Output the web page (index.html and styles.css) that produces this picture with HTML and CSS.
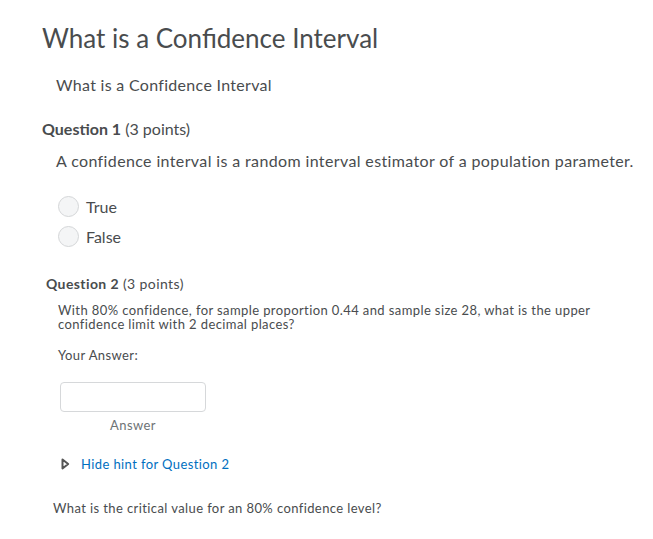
FILE: index.html
```html
<!DOCTYPE html>
<html lang="en">
<head>
    <meta charset="UTF-8">
    <title>What is a Confidence Interval</title>
    <link rel="stylesheet" href="styles.css">
</head>
<body>
    <div class="page">
        <h1 class="title">What is a Confidence Interval</h1>
        <p class="intro">What is a Confidence Interval</p>

        <!-- Question 1 -->
        <section class="question q1">
            <h2 class="q-head"><strong>Question 1</strong> (3 points)</h2>
            <p class="q-text">A confidence interval is a random interval estimator of a population parameter.</p>
            <label class="choice"><span class="radio"></span>True</label>
            <label class="choice"><span class="radio"></span>False</label>
        </section>

        <!-- Question 2 -->
        <section class="question q2">
            <h2 class="q-head"><strong>Question 2</strong> (3 points)</h2>
            <p class="q-text">With 80% confidence, for sample proportion 0.44 and sample size 28, what is the upper confidence limit with 2 decimal places?</p>
            <p class="your-answer">Your Answer:</p>
            <div class="answer-box">
                <input type="text" class="answer-input">
                <span class="answer-label">Answer</span>
            </div>
            <a class="hint-toggle" href="#">
                <svg width="9" height="12" viewBox="0 0 9 12"><path d="M1.5 1.5 L7.2 6 L1.5 10.5 Z" fill="none" stroke="#555" stroke-width="2" stroke-linejoin="round"/></svg>
                Hide hint for Question 2
            </a>
            <p class="hint">What is the critical value for an 80% confidence level?</p>
        </section>
    </div>
</body>
</html>
```

FILE: styles.css
```css
body {
    margin: 0;
    background: #fff;
    font-family: Lato, "Open Sans", sans-serif;
    color: #494c4e;
}
.page {
    padding: 22px 0 0 42px;
}
.title {
    margin: 0;
    font-size: 26px;
    font-weight: 400;
    color: #494c4e;
    line-height: 32px;
}
.intro {
    margin: 21px 0 0 14px;
    font-size: 16px;
    letter-spacing: 0.3px;
    line-height: 20px;
}
.q1 {
    margin-top: 23px;
}
.q1 .q-head {
    margin: 0;
    font-size: 16px;
    font-weight: 400;
    line-height: 22px;
}
.q-head strong {
    font-weight: 700;
}
.q1 .q-text {
    margin: 10px 0 0 14px;
    font-size: 16px;
    letter-spacing: 0.37px;
    line-height: 22px;
}
.choice {
    display: flex;
    align-items: center;
    gap: 7px;
    margin-left: 16px;
    font-size: 16px;
    height: 30px;
}
.q1 .choice:first-of-type {
    margin-top: 19px;
}
.radio {
    width: 19px;
    height: 19px;
    border-radius: 50%;
    border: 1px solid #d4d6d8;
    background: #f4f5f6;
}
.q2 {
    margin: 24px 0 0 4px;
    font-size: 13px;
    letter-spacing: 0.4px;
}
.q2 .q-head {
    margin: 0;
    font-size: 14px;
    font-weight: 400;
    line-height: 18px;
}
.q2 .q-text {
    margin: 10px 0 0 12px;
    width: 560px;
    line-height: 14px;
}
.your-answer {
    margin: 16px 0 0 12px;
    line-height: 16px;
}
.answer-box {
    display: flex;
    flex-direction: column;
    align-items: center;
    width: 146px;
    margin: 19px 0 0 14px;
}
.answer-input {
    box-sizing: border-box;
    width: 146px;
    height: 30px;
    border: 1px solid #d6d8da;
    border-radius: 4px;
    margin: 0;
}
.answer-label {
    margin-top: 5px;
    line-height: 16px;
    color: #6e7376;
}
.hint-toggle {
    display: flex;
    align-items: center;
    gap: 11px;
    margin: 23px 0 0 15px;
    line-height: 16px;
    color: #006fbf;
    text-decoration: none;
}
.hint {
    margin: 28px 0 0 7px;
    line-height: 16px;
}
```
